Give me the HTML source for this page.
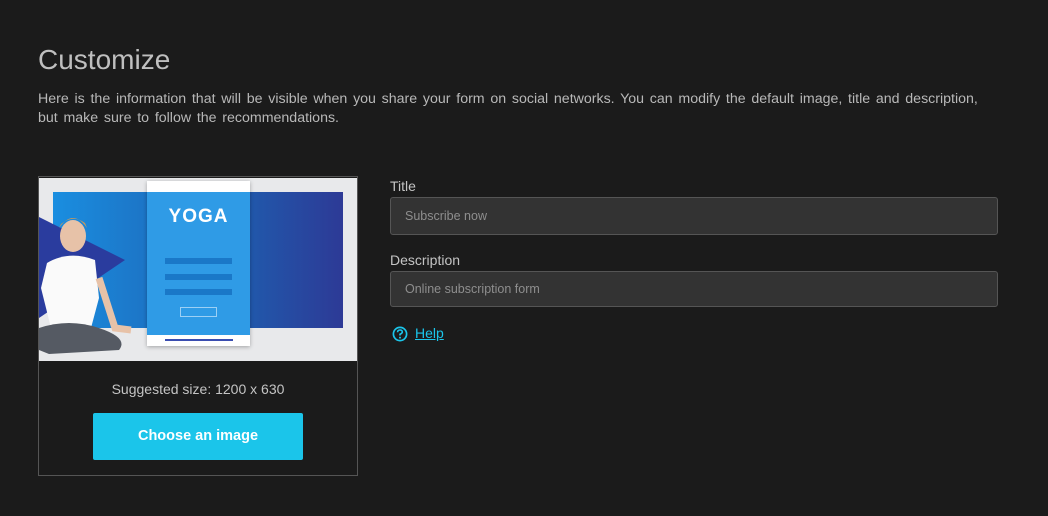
<!DOCTYPE html>
<html><head><style>
*{margin:0;padding:0;box-sizing:border-box}
body{width:1048px;height:516px;background:#1b1b1b;font-family:"Liberation Sans",sans-serif;position:relative;overflow:hidden;color:#bdbdbd}
.a{position:absolute}
h1{position:absolute;left:38px;top:44px;font-weight:400;font-size:28px;color:#bfbfbf}
.p{left:38px;top:90px;width:950px;font-size:14.2px;line-height:19px;color:#b8b8b8;word-spacing:1.8px}
.box{left:38px;top:176px;width:320px;height:300px;border:1px solid #555}
.lbl{font-size:14px;color:#c4c4c4}
.in{left:390px;width:608px;background:#333;border:1px solid #555;border-radius:3px;font-size:12.5px;color:#8e8e8e;padding-left:14px}
</style></head><body>
<h1>Customize</h1>
<div class="a p">Here is the information that will be visible when you share your form on social networks. You can modify the default image, title and description, but make sure to follow the recommendations.</div>
<div class="a box"></div>
<div class="a" style="left:39px;top:178px;width:318px;height:183px;background:#e8e9eb;overflow:hidden">
 <div class="a" style="left:14px;top:14px;width:290px;height:136px;background:linear-gradient(90deg,#1a8ee0,#1e5fb0 60%,#2d3a96)"></div>
 <svg class="a" style="left:0;top:0" width="318" height="183"><polygon points="0,39 86,82 0,140" fill="#2a3c9e"/></svg>
 <div class="a" style="left:108px;top:3px;width:103px;height:165px;background:#fff;box-shadow:0 1px 4px rgba(0,0,0,.3)"></div>
 <div class="a" style="left:108px;top:14px;width:103px;height:143px;background:#2f9be6"></div>
 <div class="a" style="left:108px;top:28px;width:103px;text-align:center;color:#fff;font-weight:900;font-size:19px;letter-spacing:1px">YOGA</div>
 <div class="a" style="left:126px;top:80px;width:67px;height:6px;background:#1a78c8"></div>
 <div class="a" style="left:126px;top:96px;width:67px;height:6px;background:#1a78c8"></div>
 <div class="a" style="left:126px;top:111px;width:67px;height:6px;background:#1a78c8"></div>
 <div class="a" style="left:141px;top:129px;width:37px;height:10px;border:1px solid #9cd0f5"></div>
 <div class="a" style="left:126px;top:161px;width:68px;height:2px;background:#3a4db0"></div>
 <svg class="a" style="left:0;top:0" width="318" height="183">
  <ellipse cx="34" cy="58" rx="13" ry="16" fill="#e7c2a8"/>
  <path d="M20,50 Q34,30 48,50 L46,45 Q34,36 22,46Z" fill="#c79a5e"/>
  <path d="M8,85 Q30,72 56,82 L60,120 L52,150 L12,150 L2,110Z" fill="#fafafa"/>
  <path d="M0,150 Q30,140 60,150 Q90,160 80,172 L10,176 L0,172Z" fill="#555a63"/>
  <path d="M60,100 L76,150 L92,152" stroke="#e7c2a8" stroke-width="7" fill="none"/>
 </svg>
</div>
<div class="a" style="left:39px;top:381px;width:318px;text-align:center;font-size:14px;color:#c4c4c4">Suggested size: 1200 x 630</div>
<div class="a" style="left:93px;top:413px;width:210px;height:47px;background:#1bc5ea;border-radius:2px;color:#fff;font-size:14.5px;font-weight:bold;text-align:center;line-height:47px">Choose an image</div>
<div class="a lbl" style="left:390px;top:178px">Title</div>
<div class="a in" style="top:197px;height:38px;line-height:36px">Subscribe now</div>
<div class="a lbl" style="left:390px;top:252px">Description</div>
<div class="a in" style="top:271px;height:36px;line-height:34px">Online subscription form</div>
<svg class="a" style="left:392px;top:326px" width="16" height="16"><circle cx="8" cy="8" r="6.6" fill="none" stroke="#1bc5ea" stroke-width="1.7"/><path d="M5.6,6.3 Q5.6,4 8,4 Q10.3,4 10.3,6 Q10.3,7.3 8,8.2 L8,9.5" fill="none" stroke="#1bc5ea" stroke-width="1.6"/><circle cx="8" cy="11.6" r="1" fill="#1bc5ea"/></svg>
<div class="a" style="left:415px;top:325px;font-size:14px;color:#1bc5ea;text-decoration:underline">Help</div>
</body></html>
